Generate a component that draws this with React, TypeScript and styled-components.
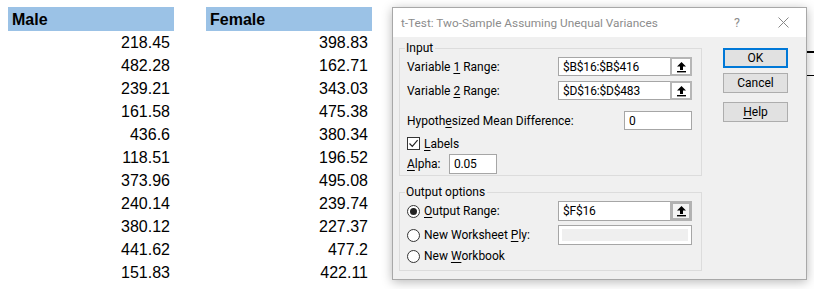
import React from "react";
import styled, { createGlobalStyle } from "styled-components";

const GlobalStyle = createGlobalStyle`
  html, body {
    margin: 0;
    padding: 0;
    background: #ffffff;
  }
  body {
    font-family: "Liberation Sans", Arial, sans-serif;
  }
`;

const Page = styled.div`
  position: relative;
  width: 814px;
  height: 289px;
  overflow: hidden;
  background: #ffffff;
`;

const Sheet = styled.div`
  display: grid;
  grid-template-columns: 166px 166px 434px;
  column-gap: 32px;
  padding: 7px 0 0 8px;
  font-family: "Liberation Sans", Arial, sans-serif;
  font-size: 16px;
  color: #000;
`;

const Column = styled.div`
  display: flex;
  flex-direction: column;
`;

const HeadCell = styled.div`
  height: 24px;
  line-height: 25px;
  padding-left: 4px;
  background: #9bc2e6;
  font-weight: bold;
`;

const NumCell = styled.div`
  height: 23px;
  line-height: 23px;
  text-align: right;
  padding-right: 4px;
`;

const OutCell = styled.div<{ $border?: string }>`
  height: 23px;
  box-sizing: border-box;
  border-bottom: ${(p) => p.$border || "none"};
`;

const Dialog = styled.div`
  position: absolute;
  left: 392px;
  top: 7px;
  width: 415px;
  height: 273px;
  box-sizing: border-box;
  border: 1px solid #a8a8a8;
  background: #f0f0f0;
  box-shadow: 0 2px 10px rgba(0, 0, 0, 0.28);
  font-family: Roboto, "Segoe UI", "Noto Sans", sans-serif;
  font-size: 12px;
  color: #000;
  display: flex;
  flex-direction: column;
`;

const TitleBar = styled.div`
  height: 29px;
  background: #ffffff;
  display: flex;
  align-items: center;
  padding-left: 8px;
  color: #8c8c8c;
  font-size: 11.8px;
`;

const TitleText = styled.div`
  flex: 1;
`;

const TitleIcon = styled.div`
  width: 46px;
  display: flex;
  justify-content: center;
  align-items: center;
  color: #8c8c8c;
  font-size: 12.5px;
`;

const Body = styled.div`
  flex: 1;
  display: flex;
  padding: 11px 0 0 6px;
  gap: 21px;
`;

const Groups = styled.div`
  display: flex;
  flex-direction: column;
  gap: 16px;
  width: 303px;
`;

const Group = styled.div<{ $h: number }>`
  position: relative;
  height: ${(p) => p.$h}px;
  box-sizing: border-box;
  border: 1px solid #dcdcdc;
  padding: 8px 0 0 7px;
  display: flex;
  flex-direction: column;
`;

const Legend = styled.span`
  position: absolute;
  top: -9px;
  left: 5px;
  padding: 0 2px 0 1px;
  background: #f0f0f0;
  line-height: 16px;
`;

const Row = styled.div<{ $h: number; $mt?: number }>`
  display: flex;
  align-items: center;
  height: ${(p) => p.$h}px;
  margin-top: ${(p) => p.$mt || 0}px;
`;

const Label = styled.div<{ $w?: number }>`
  width: ${(p) => (p.$w ? `${p.$w}px` : "auto")};
  white-space: nowrap;
`;

const U = styled.span`
  text-decoration: underline;
  text-underline-offset: 2px;
`;

const Field = styled.div<{ $w: number; $disabled?: boolean }>`
  width: ${(p) => p.$w}px;
  height: 100%;
  box-sizing: border-box;
  border: 1px solid #a6a6a6;
  background: #ffffff;
  display: flex;
  align-items: center;
  padding-left: ${(p) => (p.$disabled ? 3 : 4)}px;
  ${(p) =>
    p.$disabled &&
    `
    padding: 3px;
    & > span {
      flex: 1;
      align-self: stretch;
      background: #efefef;
    }
  `}
`;

const FieldText = styled.div`
  flex: 1;
  white-space: nowrap;
  letter-spacing: -0.2px;
`;

const PickBtn = styled.div<{ $active?: boolean }>`
  width: 22px;
  align-self: stretch;
  margin: -1px -1px -1px 0;
  box-sizing: border-box;
  border: ${(p) => (p.$active ? "3px solid #b2b2b2" : "2px solid #b6b6b6")};
  background: ${(p) => (p.$active ? "#f4f4f4" : "#ffffff")};
  display: flex;
  align-items: center;
  justify-content: center;
`;

const Check = styled.div`
  width: 13px;
  height: 13px;
  box-sizing: border-box;
  border: 1px solid #333;
  background: #fff;
  margin-right: 4px;
  display: flex;
  align-items: center;
  justify-content: center;
`;

const Radio = styled.div<{ $on?: boolean }>`
  width: 13px;
  height: 13px;
  box-sizing: border-box;
  border: 1px solid #333;
  border-radius: 50%;
  background: #fff;
  margin-right: 4px;
  display: flex;
  align-items: center;
  justify-content: center;
  &::after {
    content: "";
    display: ${(p) => (p.$on ? "block" : "none")};
    width: 7px;
    height: 7px;
    border-radius: 50%;
    background: #222;
  }
`;

const Buttons = styled.div`
  display: flex;
  flex-direction: column;
  width: 65px;
`;

const Btn = styled.div<{ $primary?: boolean; $mt: number }>`
  height: 20px;
  margin-top: ${(p) => p.$mt}px;
  box-sizing: border-box;
  border: ${(p) => (p.$primary ? "2px solid #0078d7" : "1px solid #adadad")};
  background: #e1e1e1;
  display: flex;
  align-items: center;
  justify-content: center;
`;

const UpArrow = () => (
  <svg width="11" height="12" viewBox="0 0 11 12">
    <path d="M5.5 1 L10 5.5 L7 5.5 L7 9 L4 9 L4 5.5 L1 5.5 Z" fill="#000" />
    <rect x="1" y="10" width="9" height="1.4" fill="#000" />
  </svg>
);

const CheckMark = () => (
  <svg width="11" height="11" viewBox="0 0 11 11">
    <path d="M1.5 5.5 L4.3 8.3 L9.6 2.2" fill="none" stroke="#222" strokeWidth="1.2" />
  </svg>
);

const male = ["218.45", "482.28", "239.21", "161.58", "436.6", "118.51", "373.96", "240.14", "380.12", "441.62", "151.83"];
const female = ["398.83", "162.71", "343.03", "475.38", "380.34", "196.52", "495.08", "239.74", "227.37", "477.2", "422.11"];

export default function App() {
  return (
    <Page>
      <GlobalStyle />
      <Sheet>
        <Column>
          <HeadCell>Male</HeadCell>
          {male.map((v, i) => (
            <NumCell key={i}>{v}</NumCell>
          ))}
        </Column>
        <Column>
          <HeadCell>Female</HeadCell>
          {female.map((v, i) => (
            <NumCell key={i}>{v}</NumCell>
          ))}
        </Column>
        <Column>
          <OutCell />
          <OutCell $border="2px solid #000" />
          <OutCell $border="1px solid #000" />
        </Column>
      </Sheet>

      <Dialog>
        <TitleBar>
          <TitleText>t-Test: Two-Sample Assuming Unequal Variances</TitleText>
          <TitleIcon>?</TitleIcon>
          <TitleIcon>
            <svg width="11" height="11" viewBox="0 0 11 11">
              <path d="M0.5 0.5 L10.5 10.5 M10.5 0.5 L0.5 10.5" stroke="#888" strokeWidth="1" />
            </svg>
          </TitleIcon>
        </TitleBar>
        <Body>
          <Groups>
            <Group $h={128}>
              <Legend>Input</Legend>
              <Row $h={19}>
                <Label $w={151}>
                  Variable <U>1</U> Range:
                </Label>
                <Field $w={134}>
                  <FieldText>$B$16:$B$416</FieldText>
                  <PickBtn>
                    <UpArrow />
                  </PickBtn>
                </Field>
              </Row>
              <Row $h={19} $mt={5}>
                <Label $w={151}>
                  Variable <U>2</U> Range:
                </Label>
                <Field $w={134}>
                  <FieldText>$D$16:$D$483</FieldText>
                  <PickBtn>
                    <UpArrow />
                  </PickBtn>
                </Field>
              </Row>
              <Row $h={19} $mt={11}>
                <Label $w={217}>
                  Hypoth<U>e</U>sized Mean Difference:
                </Label>
                <Field $w={68}>
                  <FieldText>0</FieldText>
                </Field>
              </Row>
              <Row $h={13} $mt={7}>
                <Check>
                  <CheckMark />
                </Check>
                <Label>
                  <U>L</U>abels
                </Label>
              </Row>
              <Row $h={20} $mt={4}>
                <Label $w={42}>
                  <U>A</U>lpha:
                </Label>
                <Field $w={48}>
                  <FieldText>0.05</FieldText>
                </Field>
              </Row>
            </Group>

            <Group $h={79}>
              <Legend>Output options</Legend>
              <Row $h={20}>
                <Radio $on />
                <Label $w={134}>
                  <U>O</U>utput Range:
                </Label>
                <Field $w={134}>
                  <FieldText>$F$16</FieldText>
                  <PickBtn $active>
                    <UpArrow />
                  </PickBtn>
                </Field>
              </Row>
              <Row $h={20} $mt={4}>
                <Radio />
                <Label $w={134}>
                  New Worksheet <U>P</U>ly:
                </Label>
                <Field $w={134} $disabled>
                  <span />
                </Field>
              </Row>
              <Row $h={16} $mt={3}>
                <Radio />
                <Label>
                  New <U>W</U>orkbook
                </Label>
              </Row>
            </Group>
          </Groups>

          <Buttons>
            <Btn $primary $mt={0}>OK</Btn>
            <Btn $mt={5}>Cancel</Btn>
            <Btn $mt={9}>
              <span>
                <U>H</U>elp
              </span>
            </Btn>
          </Buttons>
        </Body>
      </Dialog>
    </Page>
  );
}
